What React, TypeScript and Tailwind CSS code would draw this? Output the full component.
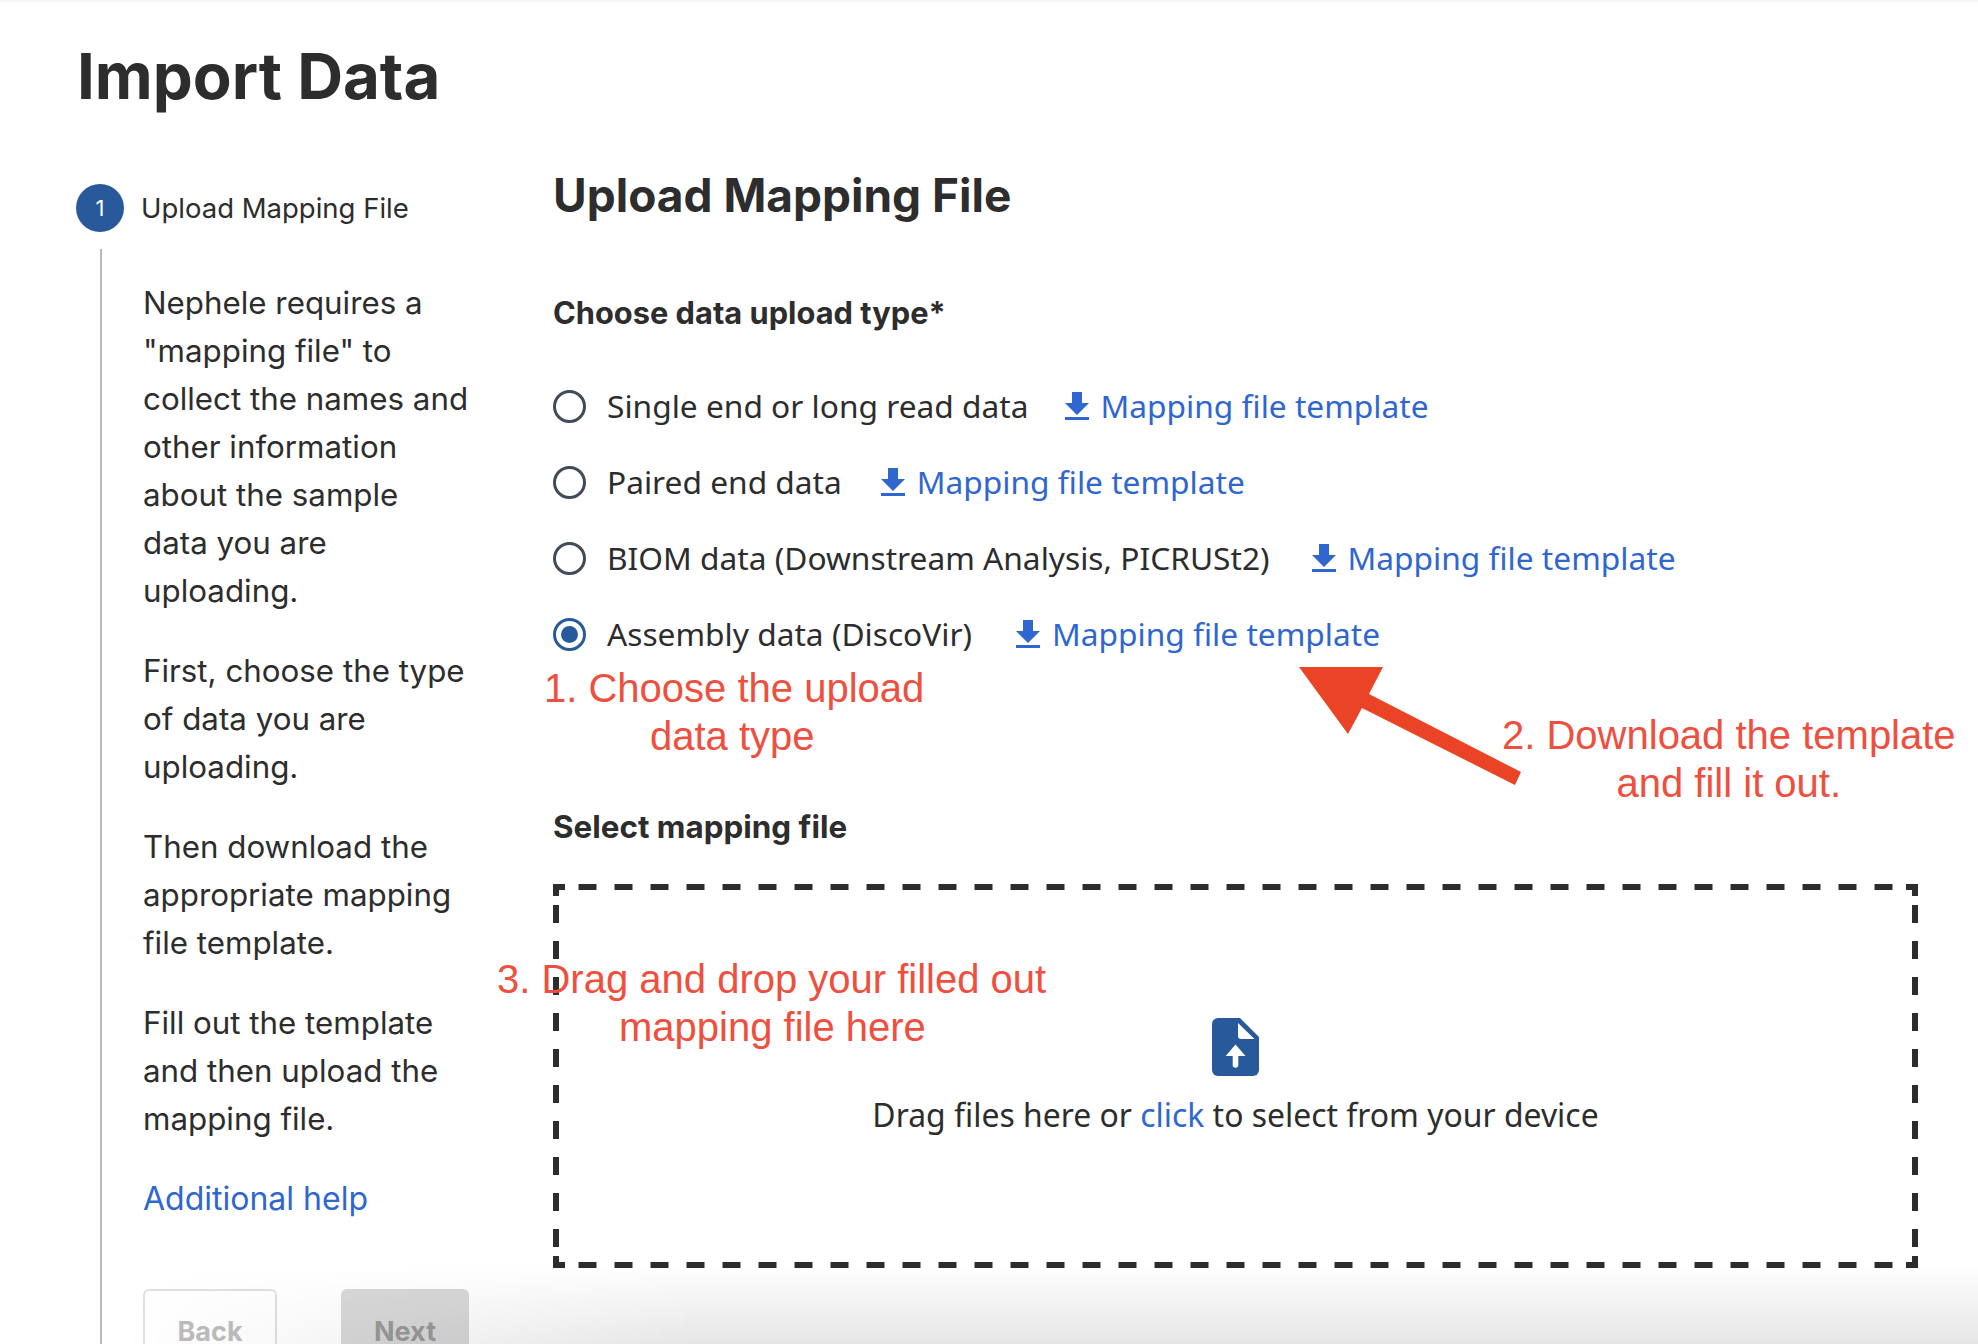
const font = "font-['Inter','Noto_Sans',sans-serif]";
const plex = "font-['Noto_Sans','Inter',sans-serif]";

const sideText = [
  ["Nephele requires a", '"mapping file" to', "collect the names and", "other information", "about the sample", "data you are", "uploading."],
  ["First, choose the type", "of data you are", "uploading."],
  ["Then download the", "appropriate mapping", "file template."],
  ["Fill out the template", "and then upload the", "mapping file."],
];

const options = [
  { label: "Single end or long read data", gap: "ml-[36px]", checked: false },
  { label: "Paired end data", gap: "ml-[39px]", checked: false },
  { label: "BIOM data (Downstream Analysis, PICRUSt2)", gap: "ml-[42px]", checked: false },
  { label: "Assembly data (DiscoVir)", gap: "ml-[44px]", checked: true },
];

function DownloadIcon() {
  return (
    <svg width="24" height="28" viewBox="0 0 24 28" className="shrink-0" fill="currentColor">
      <path d="M7 0h10v11h7L12 23 0 11h7z" />
      <rect x="0" y="25" width="24" height="3" />
    </svg>
  );
}

function FileUploadIcon() {
  return (
    <svg width="47" height="58" viewBox="0 0 47 58">
      <path
        d="M6 0h22l19 19v33a6 6 0 0 1-6 6H6a6 6 0 0 1-6-6V6a6 6 0 0 1 6-6z"
        fill="#285a9b"
      />
      <path d="M26 5l16.500 16H29a3 3 0 0 1-3-3z" fill="#fff" />
      <path d="M23.500 26.500L33.500 38h-7.200v9a2.800 2.800 0 0 1-5.600 0v-9h-7z" fill="#fff" />
    </svg>
  );
}

function Radio({ checked }: { checked: boolean }) {
  return (
    <span
      className={`flex h-[33px] w-[33px] shrink-0 items-center justify-center rounded-full border-[3px] ${
        checked ? "border-[#285a9b]" : "border-[#414b58]"
      }`}
    >
      {checked && <span className="h-[17px] w-[17px] rounded-full bg-[#285a9b]" />}
    </span>
  );
}

function DashedFrame() {
  const corners = [
    "M0 3h12M3 0v12",
    "M1353 3h12M1362 0v12",
    "M0 381h12M3 372v12",
    "M1353 381h12M1362 372v12",
  ];
  return (
    <svg width="1365" height="384" className="absolute inset-0" fill="none" stroke="#2d2d2d" strokeWidth="6">
      <path d="M25.500 3H1340M25.500 381H1340" strokeDasharray="18 18" />
      <path d="M3 21V363M1362 21V363" strokeDasharray="18 18" />
      {corners.map((d) => (
        <path key={d} d={d} />
      ))}
    </svg>
  );
}

export default function App() {
  return (
    <div className={`relative h-[1344px] w-[1978px] overflow-hidden bg-white text-[#2d2d2d] ${font}`}>
      <div className="h-[2px] bg-[#f6f6f6]" />
      <div className="pl-[76px]">
        <h1 className="mt-[37px] pl-[1px] text-[63.500px] leading-[74px] font-bold">Import Data</h1>

        <div className="mt-[71px] flex">
          <div className="w-[477px] shrink-0">
            <div className="flex h-[48px] items-center">
              <span className="flex h-[48px] w-[48px] items-center justify-center rounded-full bg-[#285a9b] text-[22px] text-white">
                1
              </span>
              <span className="ml-[17px] pt-[1px] text-[27.500px]">Upload Mapping File</span>
            </div>
            <div className="mt-[17px] ml-[24px] flex h-[1200px] border-l-[2px] border-[#b9b9b9] pl-[41px]">
              <div className="w-[340px] pt-[30px] text-[31.300px] leading-[48px]">
                {sideText.map((lines) => (
                  <p key={lines[0]} className="mb-[32px]">
                    {lines.map((line) => (
                      <span key={line} className="block whitespace-nowrap">
                        {line}
                      </span>
                    ))}
                  </p>
                ))}
                <a className="text-[32px] text-[#2f66d0]">Additional help</a>
                {/* buttons run off the bottom of the shot, so no bottom edge */}
                <div className="mt-[66px] flex gap-[64px]">
                  <button className="h-[56px] w-[134px] rounded-t-[6px] border-[2px] border-b-0 border-[#e0e0e0] pt-[27px] text-[27px] leading-none font-bold text-[#bdbdbd]">
                    Back
                  </button>
                  <button className="h-[56px] w-[128px] rounded-t-[6px] bg-[#d9d9d9] pt-[28px] text-[27px] leading-none font-bold text-[#9a9a9a]">
                    Next
                  </button>
                </div>
              </div>
            </div>
          </div>

          <div className="-mt-[17px]">
            <h2 className="text-[46px] leading-[56px] font-bold">Upload Mapping File</h2>
            <h3 className="mt-[70px] text-[30.800px] leading-[40px] font-bold">Choose data upload type*</h3>
            <div className={`mt-[53px] flex flex-col gap-[36px] text-[31.700px] leading-[40px] ${plex}`}>
              {options.map((opt) => (
                <div key={opt.label} className="flex items-center">
                  <Radio checked={opt.checked} />
                  <span className="ml-[21px] whitespace-nowrap">{opt.label}</span>
                  <a className={`${opt.gap} flex items-center gap-[12px] text-[#2f66d0]`}>
                    <DownloadIcon />
                    Mapping file template
                  </a>
                </div>
              ))}
            </div>
            <h3 className="mt-[153px] text-[31.400px] leading-[40px] font-bold">Select mapping file</h3>
            <div className={`relative mt-[37px] flex h-[384px] w-[1365px] flex-col items-center pt-[134px] text-[31.900px] leading-[40px] ${plex}`}>
              <DashedFrame />
              <FileUploadIcon />
              <p className="mt-[19px]">
                Drag files here or <a className="text-[#2f66d0]">click</a> to select from your device
              </p>
            </div>
          </div>
        </div>
      </div>

      {/* annotations pasted over the screenshot */}
      <div className="pointer-events-none absolute inset-0 font-['Liberation_Sans',Arial,sans-serif] text-[40px] leading-[48px] text-[#ee4f3e]">
        <div className="absolute top-[664px] left-[544px] whitespace-nowrap">
          1. Choose the upload
          <br />
          <span className="ml-[106px]">data type</span>
        </div>
        <div className="absolute top-[711px] left-[1502px] text-center whitespace-nowrap">
          2. Download the template
          <br />
          and fill it out.
        </div>
        <div className="absolute top-[955px] left-[497px] whitespace-nowrap">
          3. Drag and drop your filled out
          <br />
          <span className="ml-[122px]">mapping file here</span>
        </div>
        <svg width="1978" height="1344" className="absolute inset-0">
          <path d="M1299 667H1383L1369 694L1521 772L1515 785L1362 708L1348 734Z" fill="#eb4325" />
        </svg>
      </div>

      {/* window shadow along the bottom edge */}
      <div className="pointer-events-none absolute right-0 bottom-0 left-0 h-[80px] bg-gradient-to-b from-transparent to-black/10 [mask-image:linear-gradient(to_right,transparent_120px,black_700px)]" />
    </div>
  );
}
